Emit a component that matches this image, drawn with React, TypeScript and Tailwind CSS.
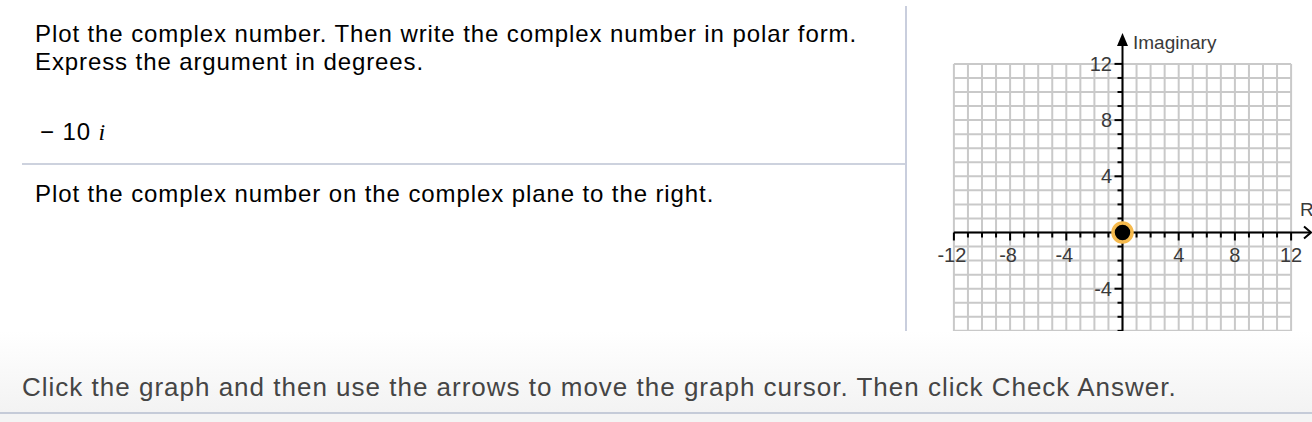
import React from "react";

const OX = 1122.5;
const OY = 232.5;
const U = 14.05;

const range = (a: number, b: number) => Array.from({ length: b - a + 1 }, (_, i) => a + i);

function ComplexPlane() {
  const xs = range(-12, 12);
  const ys = range(-7, 12);
  const top = OY - 12 * U;
  const left = OX - 12 * U;
  const right = OX + 12 * U;
  return (
    <svg width={405} height={331} viewBox="907 0 405 331" className="block">
      {/* grid */}
      <g stroke="#c9c9c9" strokeWidth={2}>
        {xs.map((x) => (
          <line key={"v" + x} x1={OX + x * U} y1={top} x2={OX + x * U} y2={340} />
        ))}
        {ys.map((y) => (
          <line key={"h" + y} x1={left} y1={OY - y * U} x2={right} y2={OY - y * U} />
        ))}
      </g>
      {/* axes */}
      <g stroke="#000" strokeWidth={2}>
        <line x1={left} y1={OY} x2={1310} y2={OY} />
        <line x1={OX} y1={340} x2={OX} y2={42} />
        {xs.map((x) => (
          <line key={"tx" + x} x1={OX + x * U} y1={OY} x2={OX + x * U} y2={OY + (x % 4 === 0 ? 8 : 5)} />
        ))}
        {ys.map((y) => (
          <line key={"ty" + y} x1={OX} y1={OY - y * U} x2={OX - (y % 4 === 0 ? 8 : 5)} y2={OY - y * U} />
        ))}
      </g>
      <polygon points={`${OX},33 ${OX - 5.5},46 ${OX + 5.5},46`} fill="#000" />
      <polyline points={`1304,${OY - 6} 1311,${OY} 1304,${OY + 6}`} fill="none" stroke="#000" strokeWidth={2} />
      {/* labels */}
      <g fill="#3a3a3a" fontFamily="'Liberation Sans', Arial, sans-serif" fontSize={20}>
        <text x={1133} y={49} fontSize={19}>Imaginary</text>
        <text x={1300} y={216} fontSize={19}>Real</text>
        {[-12, -8, -4, 4, 8, 12].map((x) => (
          <text key={"lx" + x} x={OX + x * U + (x < 0 ? -2 : 0)} y={262} textAnchor="middle">
            {x}
          </text>
        ))}
        {[12, 8, 4, -4].map((y) => (
          <text key={"ly" + y} x={1112} y={OY - y * U + 7} textAnchor="end">
            {y}
          </text>
        ))}
      </g>
      {/* cursor point */}
      <circle cx={OX} cy={OY} r={9.5} fill="#000" stroke="#f6ba4d" strokeWidth={3.5} />
    </svg>
  );
}

export default function App() {
  return (
    <div className="w-[1312px] h-[422px] overflow-hidden bg-[#f4f4f4] font-['Liberation_Sans',Arial,sans-serif] text-black">
      <div className="flex h-[331px] bg-white">
        <div className="w-[905px] pl-[22px] pt-[20px] text-[24px] leading-[28px] tracking-[0.9px]">
          <div className="pl-[13px]">
            <p>Plot the complex number. Then write the complex number in polar form.</p>
            <p>Express the argument in degrees.</p>
          </div>
          <p className="mt-[42px] pl-[18px]">
            <span>− 10 </span>
            <span className="font-['Liberation_Serif',serif] italic">i</span>
          </p>
          <div className="mt-[17px] h-[2px] bg-[#cdd2de]" />
          <p className="mt-[15px] pl-[13px]">Plot the complex number on the complex plane to the right.</p>
        </div>
        <div className="mt-[6px] w-[2px] bg-[#c9cedd]" />
        <div className="flex-1 overflow-hidden">
          <ComplexPlane />
        </div>
      </div>
      <div className="h-[83px] border-b-2 border-[#c5cbd8] bg-gradient-to-b from-white to-[#f3f3f3] pl-[22px] pt-[40px]">
        <p className="text-[26px] leading-[32px] tracking-[1px] text-[#454545]">
          Click the graph and then use the arrows to move the graph cursor. Then click Check Answer.
        </p>
      </div>
    </div>
  );
}
